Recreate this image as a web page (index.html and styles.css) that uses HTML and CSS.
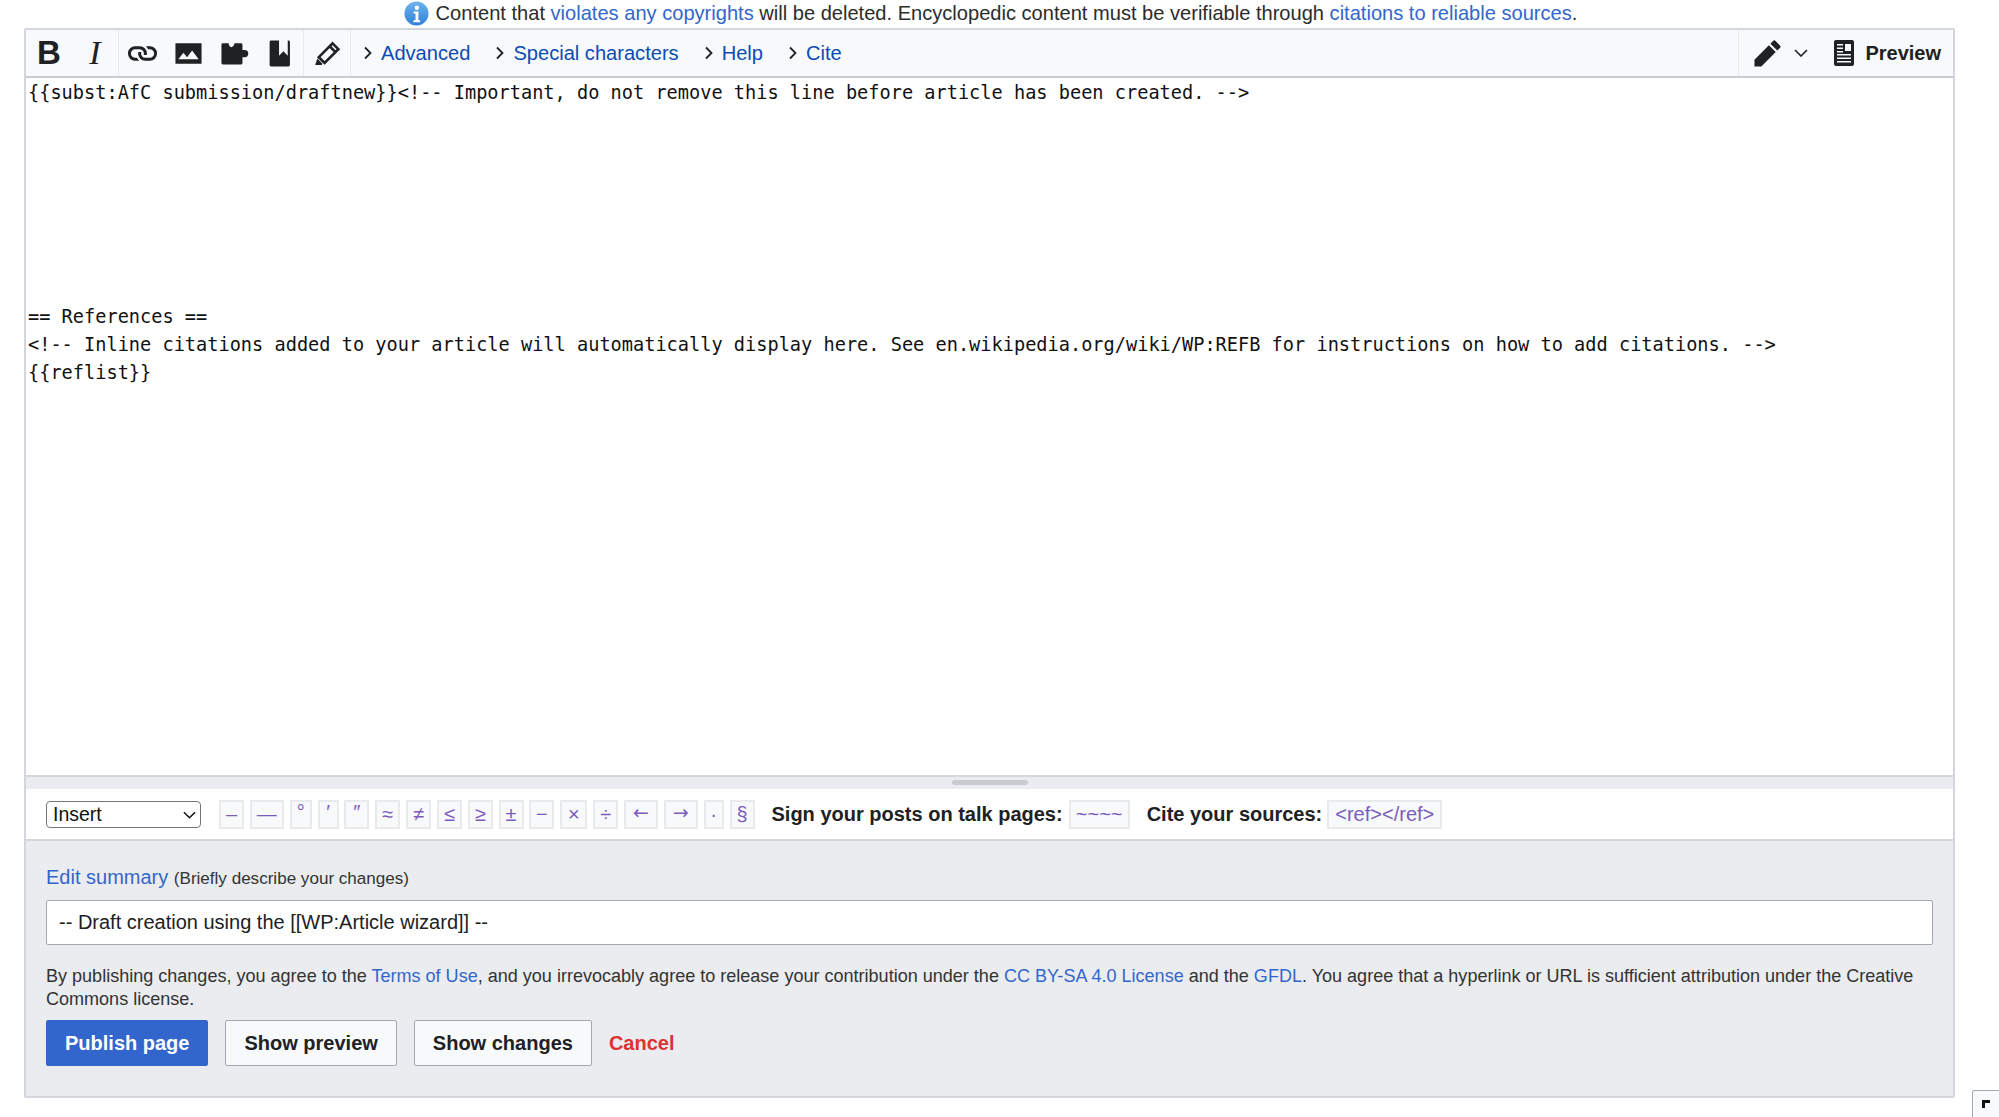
FILE: index.html
```html
<!DOCTYPE html>
<html lang="en">
<head>
  <meta charset="UTF-8">
  <title>Creating Draft - Wikipedia</title>
  <link rel="stylesheet" href="styles.css">
</head>
<body>
  <div class="notice">
    <svg class="notice-icon" viewBox="0 0 26 26">
      <defs>
        <linearGradient id="infoblue" x1="0" y1="0" x2="0" y2="1">
          <stop offset="0" stop-color="#6db3ee"/>
          <stop offset="1" stop-color="#2f80d8"/>
        </linearGradient>
      </defs>
      <circle cx="13" cy="13" r="12.5" fill="url(#infoblue)"/>
      <circle cx="13.4" cy="7" r="2.3" fill="#fff"/>
      <path d="M10 11h5v9h1.8v2h-7v-2H12v-7h-2z" fill="#fff"/>
    </svg>
    <span>Content that <a href="#">violates any copyrights</a> will be deleted. Encyclopedic content must be verifiable through <a href="#">citations to reliable sources</a>.</span>
  </div>

  <div class="editor">
    <div class="toolbar">
      <div class="tool-group">
        <button class="tool tool-bold">B</button>
        <button class="tool tool-italic">I</button>
      </div>
      <div class="tool-group">
        <button class="tool">
          <svg class="icon" viewBox="0 0 20 20"><path d="M4.83 15h2.91a4.88 4.88 0 0 1-1.55-2H5a3 3 0 1 1 0-6h3a3 3 0 0 1 2.82 4h2.1a4.83 4.83 0 0 0 .08-.83v-.34A4.83 4.83 0 0 0 8.17 5H4.83A4.83 4.83 0 0 0 0 9.83v.34A4.83 4.83 0 0 0 4.83 15z"/><path d="M15.17 5h-2.91a4.88 4.88 0 0 1 1.55 2H15a3 3 0 1 1 0 6h-3a3 3 0 0 1-2.82-4h-2.1a4.83 4.83 0 0 0-.08.83v.34A4.83 4.83 0 0 0 11.83 15h3.34A4.83 4.83 0 0 0 20 10.17v-.34A4.83 4.83 0 0 0 15.17 5z"/></svg>
        </button>
        <button class="tool">
          <svg class="icon" viewBox="0 0 20 20"><path d="M19 3H1v14h18zM3 14l3.5-4.5 2.5 3L12.5 8l4.5 6z" fill-rule="evenodd"/></svg>
        </button>
        <button class="tool">
          <svg class="icon" viewBox="0 0 20 20"><path d="M1 4a1 1 0 0 1 1-1h4c0 3.500 3.500 3.500 4 0h4.500a1 1 0 0 1 1 1v3.500h1.500a2.500 2.500 0 0 1 0 5h-1.500v4a1 1 0 0 1-1 1H2a1 1 0 0 1-1-1z"/></svg>
        </button>
        <button class="tool">
          <svg class="icon" viewBox="0 0 20 20"><path d="M3.500 1h12a1 1 0 0 1 1 1v16a1 1 0 0 1-1 1h-12a1 1 0 0 1-1-1V2a1 1 0 0 1 1-1zM9 1v10.500l3-3 3 3V1z" fill-rule="evenodd"/></svg>
        </button>
      </div>
      <div class="tool-group">
        <button class="tool">
          <svg class="icon" viewBox="0 0 20 20"><path class="pencil-line" d="M13.500 3l4 4L8 16.500l-4-4zM11.500 5l4 4"/><path d="M3 13.500L6.500 17 6 18H1.500z"/></svg>
        </button>
      </div>
      <nav class="tabs">
        <a class="tab" href="#"><svg class="chevron" viewBox="0 0 10 14"><path d="M2 1.500L7.500 7 2 12.500"/></svg>Advanced</a>
        <a class="tab" href="#"><svg class="chevron" viewBox="0 0 10 14"><path d="M2 1.500L7.500 7 2 12.500"/></svg>Special characters</a>
        <a class="tab" href="#"><svg class="chevron" viewBox="0 0 10 14"><path d="M2 1.500L7.500 7 2 12.500"/></svg>Help</a>
        <a class="tab" href="#"><svg class="chevron" viewBox="0 0 10 14"><path d="M2 1.500L7.500 7 2 12.500"/></svg>Cite</a>
      </nav>
      <div class="toolbar-right">
        <button class="mode">
          <svg class="icon" viewBox="0 0 20 20"><path d="M16.770 8l1.940-2a1 1 0 0 0 0-1.410l-3.340-3.300a1 1 0 0 0-1.410 0L12 3.230zM1 14.250V19h4.750l9.960-9.960-4.750-4.750z"/></svg>
          <svg class="caret" viewBox="0 0 14 8"><path d="M1 1l6 6 6-6"/></svg>
        </button>
        <button class="preview-btn">
          <svg class="preview-icon" viewBox="0 0 20 26"><path d="M2 0h16a2 2 0 0 1 2 2v22a2 2 0 0 1-2 2H2a2 2 0 0 1-2-2V2a2 2 0 0 1 2-2zM3 4v1.500h6V4zm8 0v7h6V4zM3 7.500V9h6V7.500zM3 11v1.500h6V11zM3 14v1.500h14V14zm0 3.500V19h14v-1.500zM3 21v1.500h14V21z" fill-rule="evenodd"/></svg>
          Preview
        </button>
      </div>
    </div>

    <textarea class="wikitext" spellcheck="false">{{subst:AfC submission/draftnew}}&lt;!-- Important, do not remove this line before article has been created. --&gt;







== References ==
&lt;!-- Inline citations added to your article will automatically display here. See en.wikipedia.org/wiki/WP:REFB for instructions on how to add citations. --&gt;
{{reflist}}</textarea>

    <div class="resizer"><span class="grip"></span></div>

    <div class="charinsert">
      <div class="select-wrap">
        <select class="insert-select"><option>Insert</option></select>
        <svg class="select-arrow" viewBox="0 0 14 8"><path d="M1 1l6 6 6-6"/></svg>
      </div>
      <div class="chars">
        <button class="char w25">–</button>
        <button class="char w34">—</button>
        <button class="char w22 sup">°</button>
        <button class="char w21 sup">′</button>
        <button class="char w25 sup">″</button>
        <button class="char w25">≈</button>
        <button class="char w25">≠</button>
        <button class="char w25">≤</button>
        <button class="char w25">≥</button>
        <button class="char w25">±</button>
        <button class="char w25">−</button>
        <button class="char w27">×</button>
        <button class="char w25">÷</button>
        <button class="char w34 arrow">←</button>
        <button class="char w34 arrow">→</button>
        <button class="char w20">·</button>
        <button class="char w25">§</button>
      </div>
      <b class="char-label sign">Sign your posts on talk pages:</b>
      <button class="char w61">~~~~</button>
      <b class="char-label cite">Cite your sources:</b>
      <button class="char w115">&lt;ref&gt;&lt;/ref&gt;</button>
    </div>

    <div class="options">
      <div class="summary-label"><a href="#">Edit summary</a> <small>(Briefly describe your changes)</small></div>
      <input class="summary-input" type="text" value="-- Draft creation using the [[WP:Article wizard]] --">
      <p class="legal">By publishing changes, you agree to the <a href="#">Terms of Use</a>, and you irrevocably agree to release your contribution under the <a href="#">CC BY-SA 4.0 License</a> and the <a href="#">GFDL</a>. You agree that a hyperlink or URL is sufficient attribution under the Creative<br>Commons license.</p>
      <div class="actions">
        <button class="btn btn-primary">Publish page</button>
        <button class="btn">Show preview</button>
        <button class="btn">Show changes</button>
        <a class="cancel" href="#">Cancel</a>
      </div>
    </div>
  </div>

  <div class="corner-tab"><span class="corner-mark"></span></div>
</body>
</html>
```

FILE: styles.css
```css
html, body {
  height: 1117px;
  overflow: hidden;
}

body {
  margin: 0;
  background-color: white;
  color: #202122;
  font-family: "Liberation Sans", Arial, sans-serif;
  font-size: 20px;
  position: relative;
}

a {
  color: #36c;
  text-decoration: none;
}

button {
  font-family: inherit;
  cursor: pointer;
}

.notice {
  width: 1931px;
  height: 27px;
  margin-left: 25px;
  display: flex;
  align-items: center;
  justify-content: center;
  gap: 7px;
  font-size: 20.09px;
  color: #2b2c2d;
}

.notice-icon {
  width: 25px;
  height: 25px;
}

.editor {
  width: 1931px;
  margin-left: 24px;
  margin-top: 1px;
  box-sizing: border-box;
  border: 2px solid #d3d6da;
  border-radius: 2px;
  height: 1070px;
  display: flex;
  flex-direction: column;
}

.toolbar {
  height: 46px;
  display: flex;
  align-items: stretch;
  background-color: #f8f9fa;
  border-bottom: 2px solid #c8ccd1;
  flex-shrink: 0;
}

.tool-group {
  display: flex;
  border-right: 1px solid #e8eaed;
}

.tool {
  width: 46px;
  padding: 0;
  border: none;
  background: none;
  color: #202122;
  display: flex;
  align-items: center;
  justify-content: center;
}

.tool-bold {
  font-size: 33px;
  font-weight: bold;
}

.tool-italic {
  font-family: "Liberation Serif", serif;
  font-size: 34px;
  font-style: italic;
}

.icon {
  width: 29px;
  height: 29px;
  fill: #202122;
}

.pencil-line {
  fill: none;
  stroke: #202122;
  stroke-width: 1.8;
}

.tabs {
  display: flex;
  align-items: center;
  padding-left: 12px;
  gap: 25px;
  font-size: 20.1px;
}

.tab {
  color: #0b4cb3;
  display: flex;
  align-items: center;
  gap: 8px;
}

.chevron {
  width: 10px;
  height: 14px;
  fill: none;
  stroke: #202122;
  stroke-width: 1.8;
}

.toolbar-right {
  margin-left: auto;
  display: flex;
  align-items: center;
  border-left: 1px solid #e8eaed;
}

.mode {
  display: flex;
  align-items: center;
  gap: 12px;
  padding: 0 0 0 14px;
  border: none;
  background: none;
}

.caret {
  width: 14px;
  height: 8px;
  fill: none;
  stroke: #202122;
  stroke-width: 1.6;
}

.preview-btn {
  display: flex;
  align-items: center;
  gap: 11px;
  padding: 0 12px 0 26px;
  border: none;
  background: none;
  color: #202122;
  font-size: 20px;
  font-weight: bold;
}

.preview-icon {
  width: 20px;
  height: 26px;
  fill: #202122;
}

.wikitext {
  display: block;
  height: 697px;
  box-sizing: border-box;
  padding: 1px 2px 0 2px;
  border: none;
  outline: none;
  resize: none;
  overflow: hidden;
  font-family: "DejaVu Sans Mono", monospace;
  font-size: 18.62px;
  line-height: 28px;
  color: #111;
  flex-shrink: 0;
}

.resizer {
  height: 12px;
  background-color: #eaecf0;
  border-top: 2px solid #d3d6da;
  display: flex;
  justify-content: center;
  flex-shrink: 0;
}

.grip {
  width: 76px;
  height: 5px;
  margin-top: 3px;
  border-radius: 3px;
  background-color: #c8ccd1;
}

.charinsert {
  height: 50px;
  display: flex;
  align-items: center;
  padding-left: 20px;
  border-bottom: 2px solid #d3d6da;
  flex-shrink: 0;
}

.select-wrap {
  position: relative;
  display: flex;
}

.insert-select {
  appearance: none;
  width: 155px;
  height: 27px;
  padding: 0 0 0 6px;
  font-family: "Liberation Sans", Arial, sans-serif;
  font-size: 19.5px;
  background-color: white;
  color: #111;
  border: 1px solid #767676;
  border-radius: 4px;
}

/* the arrow lies over the select, the native one is too small */
.select-arrow {
  position: absolute;
  right: 5px;
  top: 10px;
  width: 13px;
  height: 8px;
  fill: none;
  stroke: #111;
  stroke-width: 1.6;
  pointer-events: none;
}

.chars {
  display: flex;
  gap: 5.85px;
  margin-left: 18px;
}

.char {
  height: 29px;
  padding: 0;
  background-color: #f8f9fa;
  border: 2px solid #e9eaec;
  color: #7b5cbe;
  font-family: "Liberation Sans", Arial, sans-serif;
  font-size: 20px;
  line-height: 1;
}

.w20 { width: 20px; }
.w21 { width: 21px; }
.w22 { width: 22px; }
.w25 { width: 25px; }
.w27 { width: 27px; }
.w34 { width: 34px; }
.w61 { width: 61px; }
.w115 { width: 115px; }

.sup {
  padding-bottom: 6px;
}

.arrow {
  font-family: "DejaVu Sans", sans-serif;
  font-size: 19px;
  padding-bottom: 3px;
}

.char-label {
  font-size: 20px;
  color: #202122;
}

.sign {
  margin: 0 6px 0 17px;
}

.cite {
  margin: 0 5px 0 17px;
}

.options {
  flex: 1;
  background-color: #eaecf0;
  padding: 24px 20px 0 20px;
}

.summary-label {
  font-size: 20px;
  line-height: 24px;
}

.summary-label small {
  font-size: 17.07px;
  color: #333;
}

.summary-input {
  display: block;
  width: 100%;
  height: 45px;
  box-sizing: border-box;
  margin-top: 9px;
  padding: 0 12px;
  border: 1px solid #a2a9b1;
  border-radius: 2px;
  font-family: inherit;
  font-size: 20px;
  color: #202122;
}

.legal {
  margin: 20px 0 0 0;
  font-size: 18.05px;
  line-height: 23px;
  color: #333;
}

.actions {
  display: flex;
  align-items: center;
  gap: 17px;
  margin-top: 9px;
}

.btn {
  height: 46px;
  padding: 0 18px;
  background-color: #f8f9fa;
  border: 1px solid #a2a9b1;
  border-radius: 2px;
  color: #202122;
  font-size: 20px;
  font-weight: bold;
}

.btn-primary {
  background-color: #36c;
  border-color: #36c;
  color: white;
}

.cancel {
  color: #d33;
  font-weight: bold;
  font-size: 20px;
}

/* page-tools tab stuck to the bottom right corner */
.corner-tab {
  position: absolute;
  left: 1972px;
  top: 1090px;
  width: 40px;
  height: 40px;
  border: 1px solid #a2a9b1;
  border-radius: 2px;
  background-color: #f8f9fa;
}

.corner-mark {
  position: absolute;
  left: 9px;
  top: 9px;
  width: 8px;
  height: 8px;
  border-top: 3px solid #111;
  border-left: 3px solid #111;
  box-sizing: border-box;
}
```
